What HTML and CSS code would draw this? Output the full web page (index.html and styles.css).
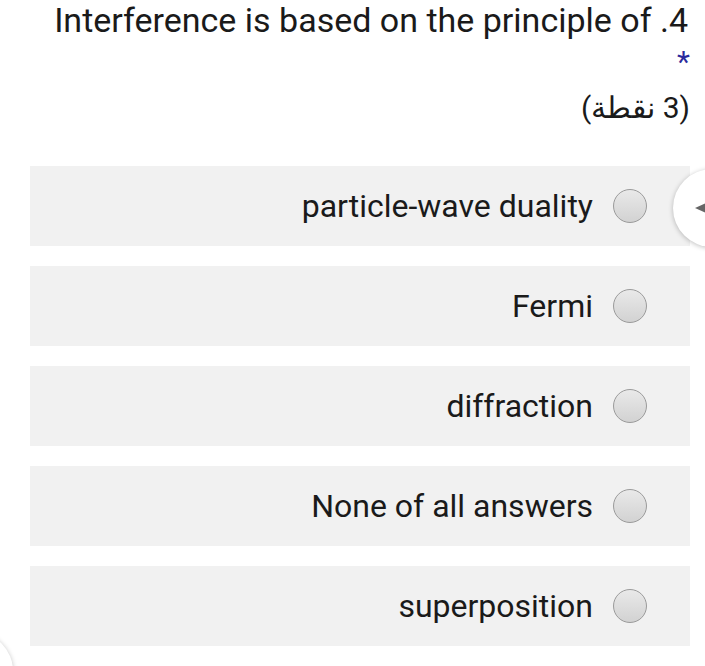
FILE: index.html
```html
<!doctype html>
<html>
<head>
<meta charset="utf-8">
<title>Question 4</title>
<link rel="stylesheet" href="styles.css">
</head>
<body>
<div class="page">
    <div class="question" dir="rtl">
        <div class="title">4. Interference is based on the principle of</div>
        <div class="required">*</div>
        <div class="points">(3 نقطة)</div>

        <ul class="options">
            <li><span class="radio"></span><span class="label">particle-wave duality</span></li>
            <li><span class="radio"></span><span class="label">Fermi</span></li>
            <li><span class="radio"></span><span class="label">diffraction</span></li>
            <li><span class="radio"></span><span class="label">None of all answers</span></li>
            <li><span class="radio"></span><span class="label">superposition</span></li>
        </ul>
    </div>

    <a class="nav next" href="javascript:;"></a>
    <a class="nav prev" href="javascript:;"></a>
</div>
</body>
</html>
```

FILE: styles.css
```css
html, body{
    margin:0;
    padding:0;
    background:#fff;
    }
.page{
    width:705px;
    height:666px;
    position:relative;
    overflow:hidden;
    font-family:Roboto, "Noto Sans", sans-serif;
    color:#1a1a1a;
    }
ul{
    margin:0;
    padding:0;
    }
li{
    list-style:none;
    }
.question{
    padding:0 15px 0 30px;
    }
.title{
    font-size:34px;
    line-height:40px;
    margin-right:2px;
    }
.required{
    color:#2a2a9c;
    font-size:30px;
    line-height:40px;
    margin-top:2px;
    }
.points{
    font-size:30px;
    line-height:40px;
    margin-top:6px;
    }
.options{
    margin-top:38px;
    display:flex;
    flex-direction:column;
    gap:20px;
    }
.options li{
    height:80px;
    background:#f1f1f1;
    display:flex;
    align-items:center;
    padding-right:43px;
    gap:20px;
    }
.label{
    font-size:32px;
    }
.radio{
    width:32px;
    height:32px;
    border-radius:50%;
    border:1px solid #9a9a9a;
    background:linear-gradient(#e9e9e9, #d2d2d2);
    flex:none;
    }
.nav{
    position:absolute;
    width:78px;
    height:78px;
    border-radius:50%;
    background:#fff;
    box-shadow:0 1px 5px rgba(0,0,0,.25);
    }
.next{
    left:673px;
    top:169px;
    }
.next:after{
    content:"";
    position:absolute;
    left:22px;
    top:31px;
    border-right:18px solid #666;
    border-top:8px solid transparent;
    border-bottom:8px solid transparent;
    }
.prev{
    left:-65px;
    top:632px;
    }
```
